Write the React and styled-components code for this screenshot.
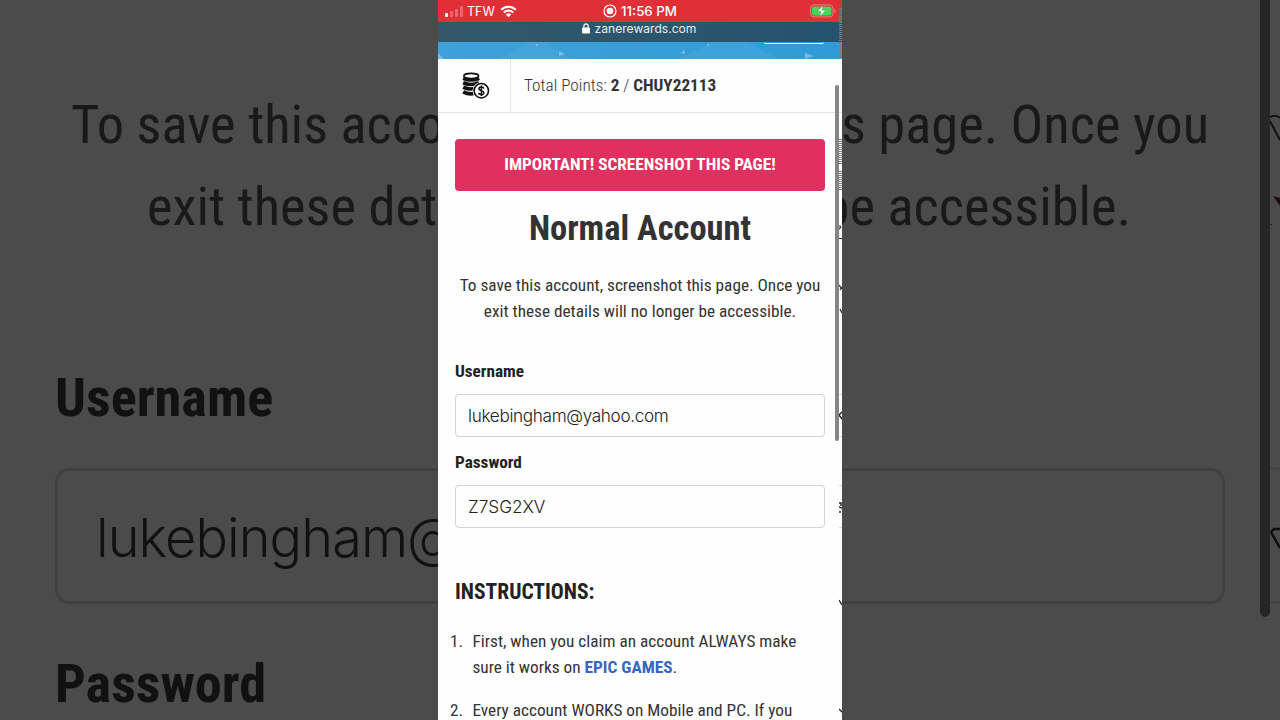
import React from 'react';
import styled, { createGlobalStyle } from 'styled-components';

const GlobalStyle = createGlobalStyle`
  * {
    box-sizing: border-box;
  }
  body {
    margin: 0;
    background: #4b4b4b;
    overflow: hidden;
  }
`;

const Coins = () => (
  <CoinsIcon viewBox="0 0 28 28">
    <path
      d="M1.200 6.300q8 3.400 16 0M1.200 10.800q8 3.400 16 0M1.200 15.300q8 3.400 16 0M1.200 19.800q6 3.400 14 1"
      fill="none"
      stroke="#111"
      strokeWidth="3.700"
    />
    <ellipse cx="9.200" cy="4" rx="7.400" ry="2.600" fill="#fff" stroke="#111" strokeWidth="1.600" />
    <circle cx="19.300" cy="18.700" r="8.800" fill="#fff" />
    <circle cx="19.300" cy="18.700" r="7.200" fill="#fff" stroke="#111" strokeWidth="1.600" />
    <path d="M21.800 16.600c-.4-2-4.800-2.100-4.900.2-.1 2.400 5 1.400 5 3.900 0 2.500-4.800 2.300-5.200.1M19.400 13.400v10.600" fill="none" stroke="#111" strokeWidth="1.500" />
  </CoinsIcon>
);

const WifiIcon = () => (
  <svg width="17" height="13" viewBox="0 0 17 12">
    <path d="M1.200 4.300a10.300 10.300 0 0 1 14.600 0M3.800 7a6.600 6.600 0 0 1 9.400 0" fill="none" stroke="#fff" strokeWidth="2.100" />
    <path d="M5.800 9a3.800 3.800 0 0 1 5.400 0l-2.700 2.800z" fill="#fff" />
  </svg>
);

const LockIcon = () => (
  <svg width="8" height="11" viewBox="0 0 8 11">
    <rect y="4.500" width="8" height="6" rx="1" fill="#fff" />
    <path d="M1.900 5V3a2.100 2.100 0 0 1 4.200 0v2" fill="none" stroke="#fff" strokeWidth="1.200" />
  </svg>
);

const BatteryIcon = () => (
  <svg width="26" height="14" viewBox="0 0 26 14">
    <rect x=".5" y=".9" width="22.500" height="12" rx="3.500" fill="none" stroke="#ef7f84" />
    <rect x="2" y="2.400" width="19.500" height="9" rx="2" fill="#45d65c" />
    <path d="M24.500 5v4q1.300-.6 1.300-2t-1.300-2" fill="#ef7f84" />
    <path d="M13.500 1.200 7.300 7.600h3.900l-1.700 5.200 6.400-6.600h-4z" fill="#fff" stroke="#3a7d3f" strokeWidth=".4" />
  </svg>
);

// sliver of the next screen showing past the phone's scrollbar
const EdgeMarks = () => (
  <Edge viewBox="0 0 3 720">
    <path d="M1.500 8v50M1.500 139v25M1.500 171v20" fill="none" stroke="#77808a" strokeWidth="3" strokeDasharray="1 1" />
    <path d="M0 226h2M0 229l2-2M0 238.500h3M0 285l3 4M1 290l2-3M1 309l2 4" fill="none" stroke="#222" strokeWidth="1.200" />
    <path d="M0 415l3-3M0 415l3 4M0 503h2v3M0 507l3 1M0 512h2M0 600l3 5M0 709l3 3" fill="none" stroke="#222" strokeWidth="1.400" />
    <path d="M0 394.500h3M0 436.500h3M0 485.500h3M0 527.500h3" stroke="#ddd" />
  </Edge>
);

const BackdropMarks = () => (
  <RightMarks viewBox="0 0 10 720">
    <path d="M0 117q6-3 10 1M0 121l10 19" fill="none" stroke="#10131c" strokeWidth="2" />
    <path d="m3 196 7 2v8z" fill="#1c100e" />
    <path d="M0 224.500h2" stroke="#15202c" />
    <path d="M0 468.500h10M0 602.500h10" stroke="#414141" strokeWidth="2" />
    <path d="M0 533l4-4h6M1 532l9 16" fill="none" stroke="#0c0e12" strokeWidth="2.500" />
  </RightMarks>
);

export default function App() {
  return (
    <Stage>
      <GlobalStyle />
      <LeftPane>
        <BackdropLine $indent={71}>To save this acco</BackdropLine>
        <BackdropLine $indent={147}>exit these det</BackdropLine>
        <BackdropForm>
          <BackdropLabel>Username</BackdropLabel>
          <BackdropField>lukebingham@</BackdropField>
          <BackdropLabel>Password</BackdropLabel>
        </BackdropForm>
      </LeftPane>
      <Phone>
        <StatusBar>
          <Side>
            <Signal>
              <Bar $h={4} $on />
              <Bar $h={6} />
              <Bar $h={8} />
              <Bar $h={11} />
            </Signal>
            <Carrier>TFW</Carrier>
            <WifiIcon />
          </Side>
          <Clock>
            <svg width="14" height="14" viewBox="0 0 14 14">
              <circle cx="7" cy="7" r="6" fill="none" stroke="#fff" strokeWidth="1.200" />
              <circle cx="7" cy="7" r="3.300" fill="#fff" />
            </svg>
            11:56 PM
          </Clock>
          <Side $end>
            <BatteryIcon />
          </Side>
        </StatusBar>
        <UrlBar>
          <LockIcon />
          zanerewards.com
        </UrlBar>
        <Hero>
          <HeroShapes viewBox="0 0 404 17" preserveAspectRatio="none">
            <path d="M60 17 92 0h15l25 17zM240 17l35-17h35l30 17z" fill="#fff" opacity=".05" />
            <path d="m121 9 6 3-6 2zM247 12l-5-1 5-3zM367 11l9 3-9 3zM0 11l6 6H0z" fill="#fff" opacity=".3" />
            <circle cx="99" cy="3" r="1" fill="#fff" opacity=".4" />
            <circle cx="270" cy="3" r="1" fill="#fff" opacity=".4" />
          </HeroShapes>
          <HeroButton />
        </Hero>
        <PointsBar>
          <CoinCell>
            <Coins />
          </CoinCell>
          <Points>
            Total Points: <b>2</b> / <b>CHUY22113</b>
          </Points>
        </PointsBar>
        <Content>
          <Alert>IMPORTANT! SCREENSHOT THIS PAGE!</Alert>
          <Title>Normal Account</Title>
          <Note>
            <Condensed>To save this account, screenshot this page. Once you</Condensed>
            <Condensed>exit these details will no longer be accessible.</Condensed>
          </Note>
          <Label>Username</Label>
          <Field $spacing="-0.35px">lukebingham@yahoo.com</Field>
          <Label>Password</Label>
          <Field>Z7SG2XV</Field>
          <Subtitle>INSTRUCTIONS:</Subtitle>
          <Steps>
            <Step>
              <Num>1.</Num>
              <div>
                <Condensed>First, when you claim an account ALWAYS make</Condensed>
                <Condensed>
                  sure it works on <Link>EPIC GAMES</Link>.
                </Condensed>
              </div>
            </Step>
            <Step>
              <Num>2.</Num>
              <Condensed>Every account WORKS on Mobile and PC. If you</Condensed>
            </Step>
          </Steps>
        </Content>
        <EdgeMarks />
        <ScrollThumb />
      </Phone>
      <RightPane>
        <BackdropLine $indent={71}>s page. Once you</BackdropLine>
        <BackdropLine $indent={149}>be accessible.</BackdropLine>
        <FieldEnd />
        <BackdropScroll />
        <BackdropMarks />
      </RightPane>
    </Stage>
  );
}

const condensed = `
  font-family: "Roboto Condensed", Roboto, sans-serif;
  font-stretch: 75%;
  white-space: nowrap;
`;

const Condensed = styled.div`
  ${condensed}
`;

const Stage = styled.div`
  display: flex;
  width: 1280px;
  height: 720px;
  overflow: hidden;
  background: #4b4b4b;
`;

const BackdropLine = styled.div`
  ${condensed}
  padding: 0 ${({ $indent }) => $indent}px;
  font-size: 54.500px;
  line-height: 82px;
`;

const LeftPane = styled.div`
  width: 438px;
  height: 720px;
  padding-top: 83px;
  overflow: hidden;
  color: #191919;
  ${BackdropLine} {
    padding-right: 0;
  }
`;

const RightPane = styled.div`
  position: relative;
  display: flex;
  flex-direction: column;
  align-items: flex-end;
  width: 438px;
  height: 720px;
  padding-top: 83px;
  overflow: hidden;
  color: #191919;
  ${BackdropLine} {
    padding-left: 0;
  }
`;

const BackdropForm = styled.div`
  padding: 109px 0 0 55px;
`;

const BackdropLabel = styled.div`
  ${condensed}
  font-size: 54.300px;
  font-weight: 700;
  line-height: 84px;
  height: 82px;
  color: #111;
`;

const BackdropField = styled.div`
  display: flex;
  align-items: center;
  height: 136px;
  margin: 30px 0 38px;
  padding: 2px 0 0 38px;
  border: 3px solid #414141;
  border-right: 0;
  border-radius: 14px 0 0 14px;
  color: #111;
  font-family: Inter, sans-serif;
  font-size: 54px;
  font-weight: 300;
  letter-spacing: -0.9px;
`;

const FieldEnd = styled.div`
  width: 383px;
  height: 136px;
  margin: 221px 55px 0 0;
  border: 3px solid #414141;
  border-left: 0;
  border-radius: 0 14px 14px 0;
`;

const BackdropScroll = styled.div`
  position: absolute;
  top: -20px;
  right: 10px;
  width: 10px;
  height: 637px;
  border-radius: 5px;
  background: #262626;
`;

const RightMarks = styled.svg`
  position: absolute;
  top: 0;
  right: 0;
  width: 10px;
  height: 720px;
`;

const Phone = styled.div`
  position: relative;
  width: 404px;
  height: 720px;
  overflow: hidden;
  background: #fefefe;
  color: #333;
`;

const StatusBar = styled.div`
  display: flex;
  align-items: center;
  height: 22px;
  padding: 0 6px 0 7px;
  background: #df3038;
  color: #fff;
  font-family: Inter, sans-serif;
  font-size: 13px;
`;

const Side = styled.div`
  display: flex;
  flex: 1;
  align-items: center;
  justify-content: ${({ $end }) => ($end ? 'flex-end' : 'flex-start')};
`;

const Signal = styled.div`
  display: flex;
  align-items: flex-end;
  gap: 2px;
  width: 22px;
`;

const Bar = styled.i`
  width: 3px;
  height: ${({ $h }) => $h}px;
  border-radius: 1px;
  background: ${({ $on }) => ($on ? '#fff' : '#e9686e')};
`;

const Carrier = styled.span`
  margin-right: 5px;
  font-size: 12.500px;
`;

const Clock = styled.div`
  display: flex;
  align-items: center;
  gap: 4px;
  margin-right: 1px;
  font-size: 13.300px;
  font-weight: 500;
`;

const UrlBar = styled.div`
  display: flex;
  align-items: center;
  justify-content: center;
  gap: 5px;
  height: 20px;
  padding: 0 2px 7px 0;
  background: linear-gradient(90deg, #33586a, #24536f);
  color: #e8eef1;
  font-family: Inter, sans-serif;
  font-size: 12.100px;
`;

const Hero = styled.div`
  position: relative;
  display: flex;
  justify-content: flex-end;
  height: 17px;
  padding-right: 18px;
  background: linear-gradient(90deg, #3fa0da, #2f9cd7);
`;

const HeroShapes = styled.svg`
  position: absolute;
  inset: 0;
  width: 404px;
  height: 17px;
`;

const HeroButton = styled.div`
  width: 60px;
  height: 2px;
  border-bottom: 1px solid #fff;
  border-radius: 0 0 3px 3px;
`;

const PointsBar = styled.div`
  display: flex;
  height: 54px;
  border-bottom: 1px solid #e4e4e4;
`;

const CoinCell = styled.div`
  display: flex;
  align-items: center;
  justify-content: center;
  width: 73px;
  padding-left: 3px;
  border-right: 1px solid #e4e4e4;
`;

const CoinsIcon = styled.svg`
  width: 28px;
  height: 28px;
`;

const Points = styled.div`
  ${condensed}
  padding-left: 13px;
  font-size: 17.200px;
  font-weight: 300;
  line-height: 53px;
  b {
    font-weight: 700;
  }
`;

const Content = styled.div`
  padding: 26px 17px 0;
`;

const Alert = styled.div`
  ${condensed}
  height: 52px;
  border-radius: 4px;
  background: #e03060;
  color: #fff;
  font-size: 17.250px;
  font-weight: 700;
  line-height: 51px;
  text-align: center;
`;

const Title = styled.div`
  ${condensed}
  padding-top: 16px;
  font-size: 34.500px;
  font-weight: 700;
  line-height: 42px;
  text-align: center;
`;

const Note = styled.div`
  display: flex;
  flex-direction: column;
  align-items: center;
  margin: 23px 0 35px;
  font-size: 17.250px;
  line-height: 26px;
`;

const Label = styled.div`
  ${condensed}
  height: 26px;
  font-size: 17.200px;
  font-weight: 700;
  line-height: 25px;
  color: #222;
`;

const Field = styled.div`
  display: flex;
  align-items: center;
  width: 370px;
  height: 43px;
  margin: 9px 0 13px;
  padding-left: 12px;
  border: 1px solid #d4d4d4;
  border-radius: 4px;
  color: #222;
  font-family: Inter, sans-serif;
  font-size: 17.200px;
  font-weight: 300;
  letter-spacing: ${({ $spacing }) => $spacing || 'normal'};
`;

const Subtitle = styled.div`
  ${condensed}
  padding-top: 38px;
  font-size: 21.500px;
  font-weight: 700;
  line-height: 26px;
  color: #222;
`;

const Steps = styled.div`
  padding-top: 23px;
`;

const Step = styled.div`
  display: flex;
  margin: 0 0 17px -5px;
  font-size: 17.250px;
  line-height: 26px;
`;

const Num = styled.span`
  ${condensed}
  width: 22.500px;
`;

const Link = styled.b`
  color: #3568c0;
`;

const Edge = styled.svg`
  position: absolute;
  top: 0;
  right: 0;
  width: 3px;
  height: 720px;
`;

const ScrollThumb = styled.div`
  position: absolute;
  top: 85px;
  left: 397px;
  width: 4px;
  height: 356px;
  border-radius: 2px;
  background: #858585;
`;
